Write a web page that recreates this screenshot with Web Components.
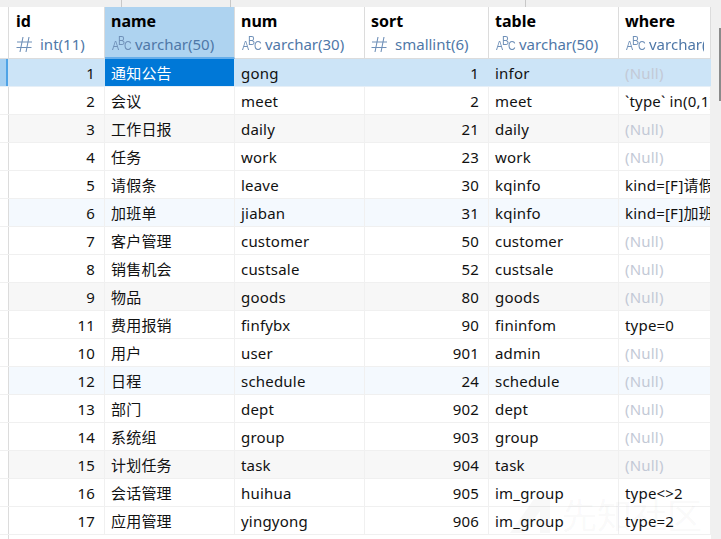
<!DOCTYPE html>
<html>
<head>
<meta charset="utf-8">
<style>
  html, body { margin: 0; height: 100%; background: #f0f0f0; overflow: hidden; }
</style>
</head>
<body>
<db-grid></db-grid>
<script>
// Column widths shared by the header and the rows
const COLS = "9px 96px 130px 130px 124px 130px 92px";

const FIELDS = [
  { name: "id", type: "int(11)", icon: "num" },
  { name: "name", type: "varchar(50)", icon: "abc", active: true },
  { name: "num", type: "varchar(30)", icon: "abc" },
  { name: "sort", type: "smallint(6)", icon: "num" },
  { name: "table", type: "varchar(50)", icon: "abc" },
  { name: "where", type: "varchar(50)", icon: "abc" },
];

// null means the database (Null) placeholder
const ROWS = [
  [1, "通知公告", "gong", 1, "infor", null],
  [2, "会议", "meet", 2, "meet", "`type` in(0,1)"],
  [3, "工作日报", "daily", 21, "daily", null],
  [4, "任务", "work", 23, "work", null],
  [5, "请假条", "leave", 30, "kqinfo", "kind=[F]请假条"],
  [6, "加班单", "jiaban", 31, "kqinfo", "kind=[F]加班单"],
  [7, "客户管理", "customer", 50, "customer", null],
  [8, "销售机会", "custsale", 52, "custsale", null],
  [9, "物品", "goods", 80, "goods", null],
  [11, "费用报销", "finfybx", 90, "fininfom", "type=0"],
  [10, "用户", "user", 901, "admin", null],
  [12, "日程", "schedule", 24, "schedule", null],
  [13, "部门", "dept", 902, "dept", null],
  [14, "系统组", "group", 903, "group", null],
  [15, "计划任务", "task", 904, "task", null],
  [16, "会话管理", "huihua", 905, "im_group", "type<>2"],
  [17, "应用管理", "yingyong", 906, "im_group", "type=2"],
];

const FONT = `"Noto Sans", "Noto Sans CJK SC", sans-serif`;

function esc(s) {
  return String(s).replace(/&/g, "&amp;").replace(/</g, "&lt;").replace(/>/g, "&gt;");
}

class TypeIcon extends HTMLElement {
  constructor() {
    super();
    this.attachShadow({ mode: "open" });
  }
  connectedCallback() {
    const css = `<style>
      :host { display: inline-flex; flex: none; color: #6f90b8; }
      svg { display: block; }
      .abc { display: flex; width: 18px; height: 17px; margin-left: 1px; font: 12.5px/11px "Liberation Sans", sans-serif; }
      .abc span { width: 6px; padding-top: 5px; transform: scaleX(.85); transform-origin: left; }
      .abc span.hi { padding-top: 0; }
    </style>`;
    if (this.getAttribute("kind") === "num") {
      this.shadowRoot.innerHTML = `${css}
        <svg width="17" height="17" viewBox="0 0 17 17" fill="none" stroke="currentColor" stroke-width="1.1">
          <path d="M7 1 L4 16 M13 1 L10 16 M1 6 H16 M0.5 11.5 H15.5"/>
        </svg>`;
    } else {
      this.shadowRoot.innerHTML = `${css}
        <div class="abc"><span>A</span><span class="hi">B</span><span>C</span></div>`;
    }
  }
}
customElements.define("type-icon", TypeIcon);

class DbHead extends HTMLElement {
  constructor() {
    super();
    this.attachShadow({ mode: "open" });
  }
  connectedCallback() {
    const f = FIELDS[+this.getAttribute("idx")];
    this.shadowRoot.innerHTML = `
      <style>
        :host {
          display: flex; flex-direction: column; box-sizing: border-box; min-width: 0;
          height: 52px; padding: 4px 0 0 6px; overflow: hidden;
          background: #fff; border-right: 1px solid #dcdcdc; border-bottom: 1px solid #dcdcdc;
        }
        :host([first]) { padding-left: 7px; }
        :host([active]) { background: #aed3f0; border-bottom: 2px solid #66aeea; }
        .name { font: 700 16px/20px ${FONT}; color: #000; white-space: nowrap; }
        .type {
          display: flex; align-items: center; gap: 7px; margin-top: 4px; height: 18px; white-space: nowrap;
          font: 15px/18px ${FONT}; color: #4f78a8; overflow: hidden;
        }
        .type.abc { gap: 5px; }
        :host([last]) .type span { -webkit-mask-image: linear-gradient(to left, transparent 0, #000 6px); }
        :host([last]) .type { margin-right: 6px; }
      </style>
      <div class="name">${esc(f.name)}</div>
      <div class="type ${f.icon}"><type-icon kind="${f.icon}"></type-icon><span>${esc(f.type)}</span></div>`;
  }
}
customElements.define("db-head", DbHead);

class DbCell extends HTMLElement {
  constructor() {
    super();
    this.attachShadow({ mode: "open" });
    this.shadowRoot.innerHTML = `
      <style>
        :host {
          display: block; box-sizing: border-box; min-width: 0; overflow: hidden; white-space: nowrap;
          height: 27px; padding: 0 6px; border-right: 1px solid #f0f0f0;
          font: 15px/28px ${FONT}; letter-spacing: .2px; color: #111;
        }
        :host([right]) { text-align: right; padding-right: 9px; }
        :host([nul]) { color: #c3c9d6; }
        :host([sel]) { background: #0078d7; color: #fff; border-right-color: #0078d7; }
      </style>
      <slot></slot>`;
  }
}
customElements.define("db-cell", DbCell);

class DbRow extends HTMLElement {
  constructor() {
    super();
    this.attachShadow({ mode: "open" });
    this.shadowRoot.innerHTML = `
      <style>
        :host {
          display: grid; grid-template-columns: ${COLS}; height: 28px; box-sizing: border-box;
          background: #fff; border-bottom: 1px solid #f0f0f0;
        }
        :host([tint="gray"]) { background: #f7f7f7; }
        :host([tint="blue"]) { background: #f4f9fe; }
        :host([selected]) { background: #cce4f7; border-bottom-color: #e6eff7; --line: #cce4f7; }
        .gutter { background: #fff; border-right: 1px solid #dcdcdc; }
        :host([selected]) .gutter { background: #a5d0f2; border-right: 0; width: 6px; box-shadow: 2px 0 0 #4fa3e6; }
        ::slotted(db-cell) { border-right-color: var(--line, #f0f0f0); }
      </style>
      <div class="gutter"></div>
      <slot></slot>`;
  }
}
customElements.define("db-row", DbRow);

class DbGrid extends HTMLElement {
  constructor() {
    super();
    this.attachShadow({ mode: "open" });
  }
  connectedCallback() {
    this.render();
  }
  render() {
    const heads = FIELDS.map((f, i) => `<db-head idx="${i}"
        ${i === 0 ? "first" : ""} ${f.active ? "active" : ""} ${i === FIELDS.length - 1 ? "last" : ""}></db-head>`).join("");

    const rows = ROWS.map((r, i) => {
      let attrs = "";
      if (i === 0) attrs = "selected";
      else if ((i + 1) % 6 === 0) attrs = 'tint="blue"';
      else if ((i + 1) % 3 === 0) attrs = 'tint="gray"';
      const cells = r.map((v, c) => {
        if (v === null) return `<db-cell nul>(Null)</db-cell>`;
        const right = c === 0 || c === 3 ? "right" : "";
        const sel = i === 0 && c === 1 ? "sel" : "";
        return `<db-cell ${right} ${sel}>${esc(v)}</db-cell>`;
      }).join("");
      return `<db-row ${attrs}>${cells}</db-row>`;
    }).join("");

    this.shadowRoot.innerHTML = `
      <style>
        :host { display: block; position: relative; width: 721px; height: 539px; overflow: hidden; background: #f0f0f0; }
        .ticks { display: grid; grid-template-columns: 122px 109px 295px; height: 7px; }
        .ticks div { border-right: 1px solid #c8c8c8; }
        .body { display: grid; grid-template-columns: 711px 10px; height: 532px; }
        .sheet { background: #fff; display: flex; flex-direction: column; overflow: hidden; }
        .heads { display: grid; grid-template-columns: ${COLS}; height: 52px; }
        .corner { background: #fff; border-right: 1px solid #dcdcdc; border-bottom: 1px solid #dcdcdc; }
        .tail { flex: 1; display: grid; grid-template-columns: 9px; }
        .tail div { border-right: 1px solid #dcdcdc; }
        .rail { display: flex; justify-content: flex-end; align-items: flex-start; padding-top: 21px; }
        .thumb { width: 2px; height: 73px; background: #8a8a8a; }
        .mark {
          position: absolute; left: 510px; top: 491px; display: flex; align-items: center; gap: 12px;
          pointer-events: none; color: rgba(110, 110, 110, .05);
        }
        .mark span { font: 35px/46px "Noto Sans CJK SC", sans-serif; white-space: nowrap; }
      </style>
      <div class="ticks"><div></div><div></div><div></div></div>
      <div class="body">
        <div class="sheet">
          <div class="heads"><div class="corner"></div>${heads}</div>
          ${rows}
          <div class="tail"><div></div></div>
        </div>
        <div class="rail"><div class="thumb"></div></div>
      </div>
      <div class="mark">
        <svg width="40" height="38" viewBox="0 0 40 38" fill="currentColor"><path d="M0 38 L24 4 L40 0 L40 38 L30 38 L30 16 L14 38 Z"/></svg>
        <span>先知社区</span>
      </div>`;
  }
}
customElements.define("db-grid", DbGrid);
</script>
</body>
</html>
